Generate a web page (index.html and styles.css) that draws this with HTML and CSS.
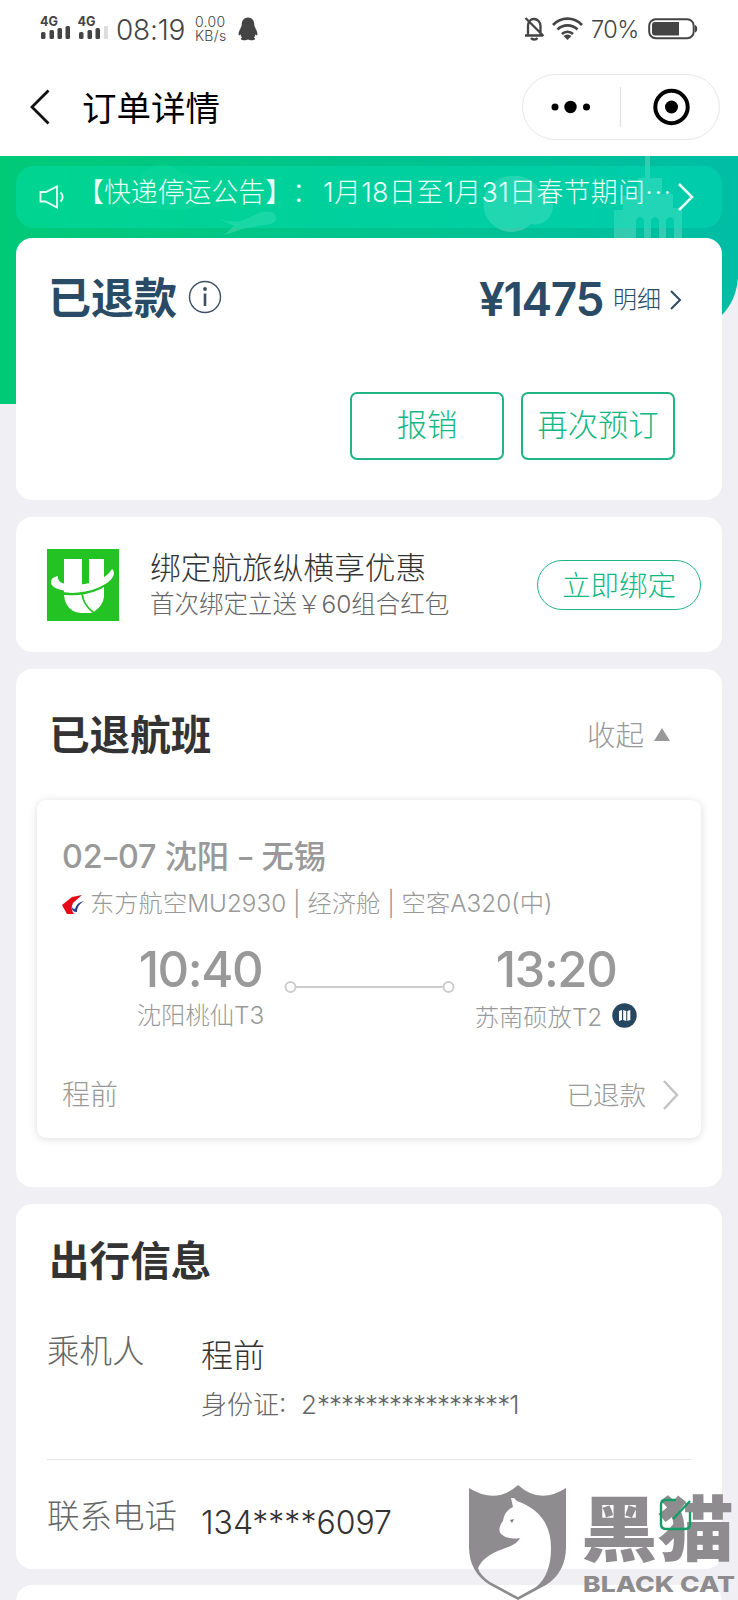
FILE: index.html
```html
<!DOCTYPE html>
<html lang="zh-CN">
<head>
<meta charset="utf-8">
<title>订单详情</title>
<link rel="stylesheet" href="styles.css">
</head>
<body>
<div class="phone">
  <header class="status">
    <svg class="signals" width="70" height="30" viewBox="0 0 70 30">
      <text class="net" x="-1" y="11.500" textLength="18" lengthAdjust="spacingAndGlyphs">4G</text>
      <text class="net" x="36.500" y="11.500" textLength="18" lengthAdjust="spacingAndGlyphs">4G</text>
      <g fill="#444"><rect x="0" y="18" width="4.500" height="7" rx="1.500"/><rect x="8.500" y="16" width="4.500" height="9" rx="1.500"/><rect x="16.500" y="14" width="4.500" height="11" rx="1.500"/><rect x="24.500" y="12" width="4.500" height="13" rx="1.500"/>
      <rect x="38" y="18" width="4.500" height="7" rx="1.500"/><rect x="46.500" y="16" width="4.500" height="9" rx="1.500"/><rect x="54.500" y="14" width="4.500" height="11" rx="1.500"/></g>
      <rect x="63" y="12" width="4" height="13" rx="1" fill="#ddd"/>
    </svg>
    <span class="clock">08:19</span>
    <span class="speed"><span>0.00</span><span>KB/s</span></span>
    <svg class="penguin" width="20" height="24" viewBox="0 0 20 24"><path fill="#444" d="M10 .5C6 .5 3.800 3.500 3.700 7.300c0 1.600-.3 2.500-1.300 4.200C1 14 .3 16.500.7 18c.3.900 1.200.2 1.900-.8.2 1.500.6 2.600 1.400 3.500-1.300.5-1.300 1.200-.8 1.900.8 1 5.300.9 6.800-.1 1.500 1 6 1.100 6.800.1.500-.7.500-1.400-.8-1.900.8-.9 1.200-2 1.400-3.500.7 1 1.600 1.700 1.900.8.400-1.500-.3-4-1.700-6.500-1-1.700-1.300-2.600-1.300-4.200C16.200 3.500 14 .5 10 .5z"/></svg>
    <div class="status-right">
      <svg width="21" height="24" viewBox="0 0 21 24" fill="none" stroke="#444" stroke-width="2.300"><path d="M4 18V9c0-4 2.500-7 6-7s6.500 3 6.500 7v9M1 18.500h18M7 21c1.500 2 5 2 6.500 0M1.500 1l18 18"/></svg>
      <svg width="31" height="24" viewBox="0 0 31 24" fill="none" stroke="#444" stroke-width="2.600"><path d="M1 8C9-.5 22-.5 30 8M5.500 12.500c5.500-5.500 14.500-5.500 20 0M10 17c3-3 8-3 11 0"/><path fill="#444" stroke="none" d="M11.500 19c2.500-2 5.500-2 8 0l-4 4z"/></svg>
      <span class="pct">70%</span>
      <svg width="50" height="22" viewBox="0 0 50 22"><rect x="1.200" y="1.200" width="44.500" height="19" rx="6.500" fill="none" stroke="#444" stroke-width="2"/><path fill="#444" d="M7 4h24v13.500H7a3 3 0 0 1-3-3V7a3 3 0 0 1 3-3zM47 7c3 1 3 6.500 0 7.500z"/></svg>
    </div>
  </header>
  <nav class="nav">
    <svg class="back" width="20" height="36" viewBox="0 0 20 36" fill="none" stroke="#111" stroke-width="2.800"><path d="M18.500 1.500 2 18l16.500 16.500"/></svg>
    <h1>订单详情</h1>
    <div class="capsule">
      <svg width="198" height="66" viewBox="0 0 198 66"><circle cx="33" cy="33" r="3.500"/><circle cx="48.500" cy="33" r="6.200"/><circle cx="64.500" cy="33" r="3.500"/><path d="M98.500 13v40" stroke="#e0e0e0" stroke-width="1.200"/><circle cx="149.500" cy="33" r="16.200" fill="none" stroke="#000" stroke-width="4"/><circle cx="149.500" cy="33" r="6.500"/></svg>
    </div>
  </nav>
  <main class="page">
    <svg class="hero" width="738" height="248" viewBox="0 0 738 248">
      <defs><linearGradient id="g"><stop offset="0" stop-color="#00ca78"/><stop offset=".5" stop-color="#00c48d"/><stop offset="1" stop-color="#00bda5"/></linearGradient></defs>
      <path fill="url(#g)" d="M0 0h738v122q-2 24-18 39L340 248H0z"/>
      <path fill="#fff" opacity=".2" d="M614 83V54h9v-14h15V22h7V0h5v22h12v16h11v14h9v31h-8V64q-4-6-8 0v19h-7V64q-4-6-8 0v19h-7V64q-4-6-8 0v19zM511 20a28 28 0 1 0 20 48 15 15 0 1 0 8-35 28 28 0 0 0-28-13z"/>
      <path fill="#fff" opacity=".16" d="M217 62q12 5 24 3l20-9q14-2 15 5t-12 8l-22 4q-10 4-18 6l10-9z"/>
      <path fill="#fff" opacity=".04" d="M140 20q18-22 40-4 22 4 22 22t-30 16q-40 4-32-34z"/>
    </svg>
    <div class="notice">
      <svg width="27" height="24" viewBox="0 0 27 24" fill="none" stroke="#e8fff7" stroke-width="1.800"><path d="M1.500 7v9.500h5L18 22.500v-21L7 7zM21.500 7.500q4.500 4.500 0 9"/></svg>
      <span class="notice-text">【快递停运公告】：<span class="dates">1月18日至1月31日春节期间<span class="dots">···</span></span></span>
      <svg class="more" width="17" height="28" viewBox="0 0 17 28" fill="none" stroke="#e8fff7" stroke-width="2.500"><path d="m2 1 13 13L2 27"/></svg>
    </div>
    <section class="card refund">
      <div class="refund-top">
        <h2 class="state">已退款</h2>
        <svg class="info" width="34" height="34" viewBox="0 0 34 34"><circle cx="17" cy="17" r="15.500" fill="none" stroke="#3b5064" stroke-width="1.400"/><circle cx="17" cy="9" r="1.900" fill="#3b5064"/><path d="M17 13.500V26" stroke="#3b5064" stroke-width="2.600"/></svg>
        <strong class="amount">¥1475</strong>
        <span class="detail">明细</span>
        <svg width="12" height="20" viewBox="0 0 12 20" fill="none" stroke="#2f4a61" stroke-width="2"><path d="m1 1 9 9-9 9"/></svg>
      </div>
      <div class="actions"><button class="btn">报销</button><button class="btn">再次预订</button></div>
    </section>
    <section class="card bind">
      <svg class="umetrip" width="72" height="72" viewBox="0 0 72 72"><path fill="#22c322" d="M0 0h72v72H0z"/><path fill="#fff" d="M17 10h18v30h7V10h15v38q-1 8-9 14-2 2-4 2H34q-10-1-14-8-3-5-3-12z"/><path fill="none" stroke="#22c322" stroke-width="2.400" d="M10 43c16 5 42 1 54-12"/><path fill="none" stroke="#22c322" stroke-width="1.800" d="M35 44q1 12 12 20"/><path fill="#fff" d="M11 27c-2 8 12 10 23 8.500C48 34 61 28 64.500 20.500h1.500C70 28 60 36 48 39.500 34 44 10 44 4.500 35.500 3 30 6 28 11 27z"/></svg>
      <div class="bind-text"><div class="bind-title">绑定航旅纵横享优惠</div><div class="bind-sub">首次绑定立送￥60组合红包</div></div>
      <button class="pill">立即绑定</button>
    </section>
    <section class="card flights">
      <div class="section-head"><h2>已退航班</h2><span class="collapse">收起</span><i class="tri"></i></div>
      <article class="flight">
        <h3>02<span class="dash">-</span>07 沈阳 <span class="dash">-</span> 无锡</h3>
        <div class="carrier">
          <svg width="22" height="20" viewBox="0 0 22 20"><path fill="#e60a18" d="M20 0 10 2 0 10l5 9h7Q8 14 11 8z"/><path fill="#2b3d90" d="M22 6q-7 1-9 8-3 0-3-3-1 6 5 6 0-7 7-11z"/></svg>
          <span>东方航空MU2930 | 经济舱 | 空客A320(中)</span>
        </div>
        <div class="route">
          <div class="stop from"><b>10:40</b><span>沈阳桃仙T3</span></div>
          <svg class="track" width="171" height="14" viewBox="0 0 171 14" fill="none" stroke="#ccc" stroke-width="2"><circle cx="6.500" cy="7" r="5"/><path d="M11.500 7h148"/><circle cx="164.500" cy="7" r="5"/></svg>
          <div class="stop to"><b>13:20</b><span class="airport">苏南硕放T2 <svg width="25" height="25" viewBox="0 0 25 25"><circle cx="12.500" cy="12.500" r="12.200" fill="#264761"/><path fill="#fff" d="m7 8 3-1v10l-3 1zM11.200 7l3 1v10l-3-1zM15.300 8l3-1v10l-3 1z"/></svg></span></div>
        </div>
        <div class="flight-foot"><span>程前</span><span class="foot-state">已退款</span><svg width="17" height="30" viewBox="0 0 17 30" fill="none" stroke="#c4c4c4" stroke-width="2.500"><path d="m2 1 13 14L2 29"/></svg></div>
      </article>
    </section>
    <section class="card travel">
      <h2>出行信息</h2>
      <div class="row person"><span class="label">乘机人</span><div><div class="value">程前</div><div class="idno">身份证:&nbsp; <span>2<span class="stars">****************</span>1</span></div></div></div>
      <div class="row contact"><span class="label">联系电话</span><span class="value phone-no">134****6097</span></div>
    </section>
    <section class="card next"></section>
  </main>
  <svg class="watermark" width="288" height="120" viewBox="0 0 288 120">
    <path fill="#8e8c8e" fill-rule="evenodd" d="M19 8q27 17 49-3 22 20 48 3v59q0 25-20 38l-28 15-28-15Q19 92 19 67zM61 18l2 9q-9 4-10 14-6 8-2 13 6 6 19 4-2 6-17 11-20 7-25 19 2 7 12 14l28 15 18-10q15-12 15-39 0-35-34-47l-3-3z"/>
    <path fill="#777" d="m60 40 4-1-2 4z"/>
    <text class="cat-cn" x="131" y="75" textLength="153" lengthAdjust="spacingAndGlyphs">黑猫</text>
    <text class="cat-en" x="133" y="112" textLength="152" lengthAdjust="spacingAndGlyphs">BLACK CAT</text>
    <path fill="none" stroke="#159c67" stroke-width="2.400" d="M226 20h-10q-5 0-5 5v19q0 5 5 5h19q5 0 5-5V32M223 39l17-18"/>
  </svg>
</div>
</body>
</html>
```
FILE: styles.css
```css
* { box-sizing: border-box; }
body { margin: 0; background: #fff; font-family: Inter, "Noto Sans CJK SC", sans-serif; font-weight: 300; color: #333; text-spacing-trim: space-all; }
h1, h2, h3 { margin: 0; }
svg { display: block; flex: none; }
span, h1, h2, h3, strong, b, div { white-space: nowrap; }
.phone { position: relative; width: 738px; height: 1600px; overflow: hidden; }
.status { height: 60px; display: flex; align-items: flex-start; padding: 14px 40px 0 41px; color: #444; }
.signals { overflow: visible; }
.net { font: 700 13px Inter, sans-serif; fill: #444; }
.clock { font-size: 28px; line-height: 33px; margin-left: 5px; width: 69px; letter-spacing: -.2px; }
.speed { margin: 1px 0 0 10px; width: 43px; display: flex; flex-direction: column; font-size: 14px; line-height: 14px; letter-spacing: .3px; }
.penguin { margin-top: 3px; }
.status-right { margin-left: auto; display: flex; align-items: center; height: 30px; }
.status-right svg:nth-child(2) { margin-left: 7px; }
.pct { font-size: 23.500px; margin: 0 8px 0 8px; width: 49px; letter-spacing: -.5px; line-height: 30px; padding-top: 1px; }
.nav { height: 96px; display: flex; align-items: center; padding: 0 18px 2px 30px; }
.nav h1 { font-size: 34.500px; font-weight: 400; color: #000; margin: 3px 0 0 32px; line-height: 50px; }
.capsule { margin-left: auto; width: 198px; height: 66px; border: 1.500px solid #e8e8e8; border-radius: 33px; display: flex; justify-content: center; align-items: center; }
.page { position: relative; height: 1444px; background: #efeff4; padding: 10px 16px 0; }
.hero { position: absolute; left: 0; top: 0; }
.notice { position: relative; height: 62px; border-radius: 18px; background: rgba(0, 232, 190, .35); display: flex; align-items: center; padding: 0 28px 0 23px; color: #e8fff7; }
.notice-text { font-size: 26.900px; line-height: 38px; margin: -10px 0 0 11px; width: 590px; }
.dates { margin-left: 4px; letter-spacing: .35px; }
.dots { letter-spacing: 1.500px; }
.notice .more { margin-left: auto; }
.card { position: relative; background: #fff; border-radius: 16px; }
.refund { margin-top: 10px; height: 262px; }
.refund-top { display: flex; align-items: center; padding: 20px 40px 0 32px; height: 99px; color: #2a4b66; }
.state { font-size: 43px; line-height: 62px; font-weight: 700; }
.info { margin-left: 11px; margin-top: -2px; }
.amount { margin: 3px 0 0 auto; font-size: 46px; font-weight: 600; letter-spacing: -1.400px; }
.detail { font-size: 24px; margin: 0 9px 0 10px; }
.refund-top svg:last-child { margin-top: 4px; }
.actions { display: flex; justify-content: flex-end; gap: 17px; padding: 55px 47px 0 0; }
.btn { width: 154px; height: 68px; border: 2px solid #21b585; border-radius: 7px; background: #fff; color: #11b87f; font: 300 30.300px Inter, "Noto Sans CJK SC", sans-serif; padding: 0 0 7px; }
.bind { margin-top: 17px; height: 135px; display: flex; align-items: center; padding: 0 21px 0 31px; }
.bind-text { margin: 2px 0 0 31px; }
.bind-title { font-size: 30.700px; line-height: 39px; margin-top: -1px; }
.bind-sub { font-size: 24.500px; line-height: 35px; color: #666; }
.pill { margin-left: auto; width: 164px; height: 50px; border: 1.500px solid #21b585; border-radius: 25px; background: #fff; color: #11b87f; font: 300 28.500px Inter, "Noto Sans CJK SC", sans-serif; padding: 0 0 2px; }
.flights { margin-top: 17px; height: 518px; padding: 0 21px; }
.section-head { height: 131px; display: flex; align-items: center; padding: 0 31px 0 12px; }
.section-head h2, .travel h2 { font-size: 40.600px; font-weight: 700; }
.section-head h2 { margin-top: -5px; }
.collapse { margin: -2px 0 0 auto; color: #999; font-size: 28.500px; }
.tri { margin-left: 10px; border: 8.500px solid transparent; border-top: 0; border-bottom: 13px solid #999; }
.flight { height: 338px; border-radius: 9px; box-shadow: 0 1px 8px rgba(0, 0, 0, .14); padding: 33px 22px 0 25px; color: #999; }
.flight h3 { font-size: 32.300px; line-height: 48px; font-weight: 500; letter-spacing: -.2px; }
.dash { display: inline-block; transform: scaleX(1.250); margin: 0 .5px; }
.carrier { display: flex; align-items: center; height: 41px; font-size: 24.300px; gap: 6px; }
.carrier svg { margin-top: 7px; }
.route { display: grid; grid-template-columns: 222px 171px 1fr; height: 114px; }
.stop { display: flex; flex-direction: column; align-items: center; line-height: 54px; }
.from { padding-left: 55px; }
.to { padding-right: 22px; }
.track { margin-top: 58px; }
.stop b { font-size: 49px; font-weight: 500; letter-spacing: -1.400px; margin-top: 21px; }
.stop span { font-size: 24.300px; line-height: 37px; display: flex; gap: 10px; }
.stop .airport { line-height: 41px; }
.airport svg { margin-top: 6px; }
.flight-foot { display: flex; align-items: center; margin-top: 37px; font-size: 28px; line-height: 44px; }
.foot-state { margin-left: auto; margin-right: 16px; font-size: 26.500px; }
.travel { margin-top: 17px; height: 365px; padding: 28px 31px 0; }
.travel h2 { line-height: 60px; padding-left: 2px; }
.row { display: flex; }
.label { width: 154px; font-size: 32.500px; line-height: 48px; color: #666; }
.value { font-size: 32px; line-height: 48px; }
.person { height: 168px; border-bottom: 1.500px solid #e5e5e5; padding-top: 36px; }
.person .value { margin-top: 4px; }
.idno { color: #666; font-size: 26px; line-height: 50px; }
.stars { letter-spacing: -1px; }
.contact { padding-top: 33px; }
.phone-no { margin-top: 6px; }
.next { margin-top: 16px; height: 60px; }
.watermark { position: absolute; left: 450px; top: 1480px; }
.cat-cn { font: 900 71px "Noto Sans CJK SC", sans-serif; fill: #8e8c8e; }
.cat-en { font: 800 22px Inter, sans-serif; fill: #8e8c8e; }
```
